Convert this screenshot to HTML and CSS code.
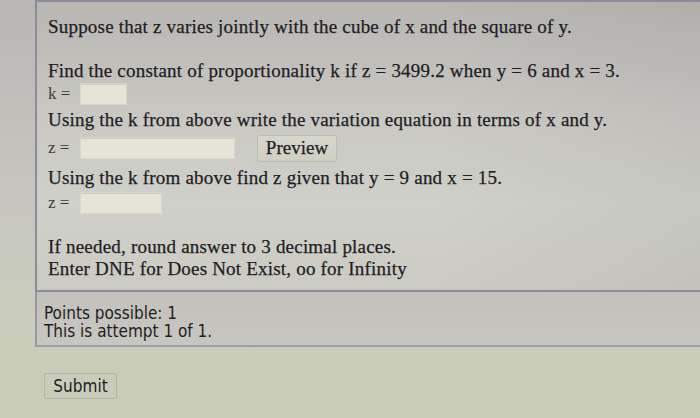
FILE: index.html
```html
<!DOCTYPE html>
<html>
<head>
<meta charset="utf-8">
<link rel="stylesheet" href="styles.css">
</head>
<body>
<div class="page">
  <div class="question">
    <div class="row r1">Suppose that z varies jointly with the cube of x and the square of y.</div>
    <div class="row r2">Find the constant of proportionality k if z = 3499.2 when y = 6 and x = 3.</div>
    <div class="row r3"><span class="lbl">k =</span><span class="inp w-k"></span></div>
    <div class="row r4">Using the k from above write the variation equation in terms of x and y.</div>
    <div class="row r5"><span class="lbl">z =</span><span class="inp w-z"></span><span class="btn preview">Preview</span></div>
    <div class="row r6">Using the k from above find z given that y = 9 and x = 15.</div>
    <div class="row r7"><span class="lbl">z =</span><span class="inp w-z2"></span></div>
    <div class="row r8">If needed, round answer to 3 decimal places.</div>
    <div class="row r9">Enter DNE for Does Not Exist, oo for Infinity</div>
  </div>
  <div class="points">
    <div class="pline">Points possible: 1</div>
    <div class="pline">This is attempt 1 of 1.</div>
  </div>
  <div class="actions">
    <span class="btn submit">Submit</span>
  </div>
</div>
</body>
</html>
```

FILE: styles.css
```css
html, body {
  margin: 0;
  padding: 0;
}
body {
  width: 700px;
  height: 418px;
  overflow: hidden;
  background: linear-gradient(180deg, #b9b7b3 0%, #c6c5c0 45%, #cacdbb 75%, #c9ccb6 100%);
  font-family: "Liberation Serif", "Times New Roman", serif;
  color: #1f1d24;
}
.page {
  padding-left: 35px;
  display: flex;
  flex-direction: column;
}
.question {
  border: 2px solid #8e8c9b;
  border-right: none;
  background: linear-gradient(90deg, rgba(0,0,0,0) 0%, rgba(0,0,0,0) 60%, rgba(60,55,60,0.06) 100%),
              linear-gradient(180deg, #b8b6b2 0%, #c9c8c3 40%, #d0d0ca 70%, #cbcbc3 100%);
  padding: 13px 0 10px 11px;
  height: 265px;
  display: flex;
  flex-direction: column;
  font-size: 19px;
  letter-spacing: 0.2px;
  -webkit-text-stroke: 0.25px #1f1d24;
}
.row {
  display: flex;
  align-items: center;
  white-space: nowrap;
}
.r1 { height: 24px; }
.r2 { height: 23px; margin-top: 20px; }
.r3 { height: 24px; }
.r4 { height: 28px; }
.r5 { height: 28px; }
.r6 { height: 29px; margin-top: 1px; }
.r7 { height: 22px; }
.r8 { height: 22px; margin-top: 22px; }
.r9 { height: 22px; }
.lbl {
  font-size: 17px;
  width: 32px;
  letter-spacing: 0;
  color: #3a3840;
  -webkit-text-stroke: 0;
}
.inp {
  display: inline-block;
  height: 20px;
  background: #e6e4d7;
  border: 1px solid #d8d6cb;
  box-shadow: inset 0 1px 0 #cfcdc2;
}
.w-k { width: 45px; }
.w-z { width: 153px; }
.w-z2 { width: 80px; }
.btn {
  display: inline-flex;
  align-items: center;
  justify-content: center;
  border: 1px solid #bdbcb1;
  border-radius: 2px;
  background: linear-gradient(180deg, #d6d6cc, #cfcfc4);
}
.preview {
  margin-left: 22px;
  width: 78px;
  height: 25px;
  font-size: 19px;
  letter-spacing: 0;
}
.points {
  border-left: 2px solid #9896a2;
  border-bottom: 2px solid #9e9ca5;
  background: linear-gradient(180deg, #c2c1bc 0%, #c7c6c0 100%);
  height: 41px;
  padding: 12px 0 0 7px;
  font-family: "DejaVu Sans Condensed", "DejaVu Sans", sans-serif;
  font-size: 17px;
  color: #1f1d24;
}
.pline {
  height: 18px;
  line-height: 18px;
}
.actions {
  padding: 26px 0 0 9px;
  display: flex;
}
.submit {
  width: 71px;
  height: 24px;
  font-family: "DejaVu Sans Condensed", "DejaVu Sans", sans-serif;
  font-size: 17px;
  background: #c9ccb9;
  border-color: #b4b6a6;
  color: #1f1d24;
}
```
